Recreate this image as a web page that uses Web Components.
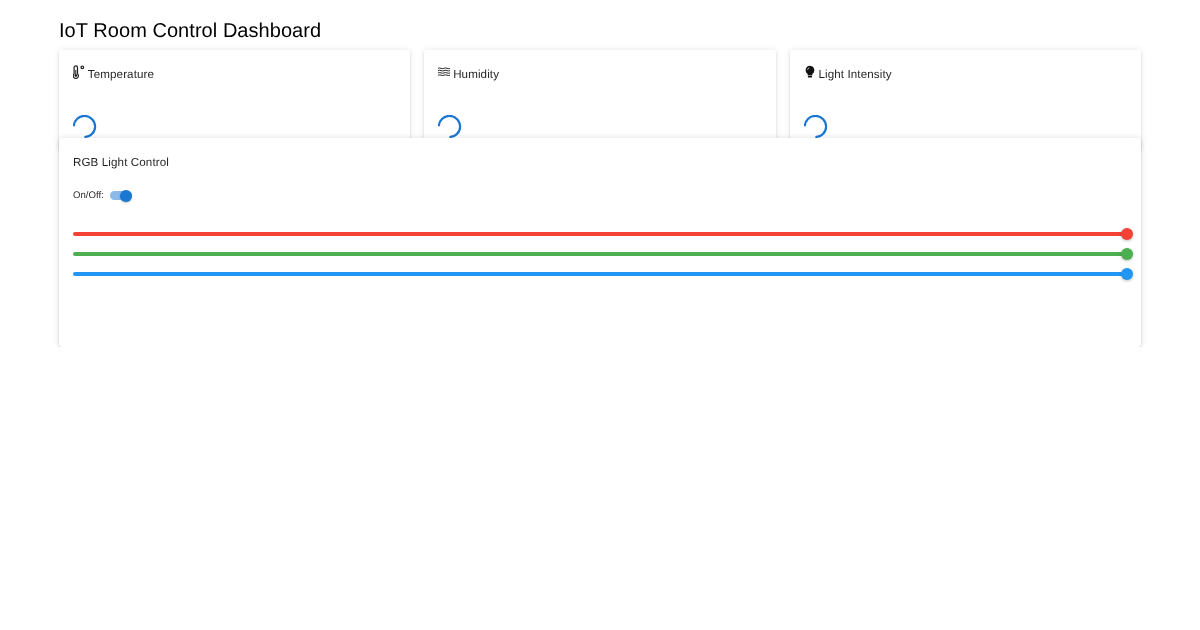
<!DOCTYPE html>
<html lang="en"><head><meta charset="utf-8"><title>IoT Room Control Dashboard</title>
<style>
html,body{margin:0;padding:0;background:#fff;font-family:"Liberation Sans",Arial,sans-serif;text-rendering:geometricPrecision}
</style></head><body>
<iot-dashboard>
  <sensor-card slot="sensors" label="Temperature"><svg slot="icon" viewBox="0 0 12 14" width="12" height="14"><path fill="none" stroke="#1c1c1c" stroke-width="1.200" d="M1.100 2.600a1.700 1.700 0 0 1 3.400 0v6.200a2.600 2.600 0 1 1-3.400 0z"/><rect x="2.300" y="5" width="1" height="5" fill="#1c1c1c"/><circle cx="2.800" cy="10.600" r="1.300" fill="#1c1c1c"/><circle cx="9.300" cy="2.300" r="1.300" fill="none" stroke="#1c1c1c" stroke-width="1.200"/></svg></sensor-card>
  <sensor-card slot="sensors" label="Humidity"><svg slot="icon" viewBox="0 0 12 14" width="12" height="14"><g fill="none" stroke="#111" stroke-width=".9"><path d="M0 3.300c1-.45 2-.45 3 0s2 .45 3 0 2-.45 3 0 2 .45 3 0"/><path d="M0 5.600c1-.45 2-.45 3 0s2 .45 3 0 2-.45 3 0 2 .45 3 0"/><path d="M0 7.900c1-.45 2-.45 3 0s2 .45 3 0 2-.45 3 0 2 .45 3 0"/><path d="M0 10.200c1-.45 2-.45 3 0s2 .45 3 0 2-.45 3 0 2 .45 3 0"/></g></svg></sensor-card>
  <sensor-card slot="sensors" label="Light Intensity"><svg slot="icon" viewBox="0 0 12 14" width="12" height="14"><path fill="#111" d="M6 .8a4.400 4.400 0 0 0-2.300 8.100V10.400h4.600V8.900A4.400 4.400 0 0 0 6 .8z"/><rect x="3.900" y="10.900" width="4.200" height="1.700" rx=".6" fill="#111"/><path d="M3.500 4.900a2.600 2.600 0 0 1 1.900-2.100" fill="none" stroke="#fff" stroke-width=".7"/></svg></sensor-card>
  <rgb-control slot="control"></rgb-control>
</iot-dashboard>
<script>
function tpl(html){const t=document.createElement('template');t.innerHTML=html;return t;}
const dashT=tpl(`<style>
:host{display:block;width:1082px;margin:0 auto;box-sizing:border-box;padding-top:18px;will-change:transform}
h1{margin:0;font:400 20px/27px "Liberation Sans",Arial,sans-serif;color:#000;letter-spacing:.05px;height:32px}
.row{display:grid;grid-template-columns:repeat(3,1fr);gap:14px}
.ctl{margin-top:-14px;position:relative}
</style><h1>IoT Room Control Dashboard</h1><div class="row"><slot name="sensors"></slot></div><div class="ctl"><slot name="control"></slot></div>`);
class IotDashboard extends HTMLElement{constructor(){super();this.attachShadow({mode:'open'}).append(dashT.content.cloneNode(true));}}
customElements.define('iot-dashboard',IotDashboard);

const cardT=tpl(`<style>
:host{display:block;box-sizing:border-box;height:102px;padding:14px;background:#fff;border-radius:2px;
box-shadow:0 2px 2px -1px rgba(0,0,0,.22),0 1px 2px rgba(0,0,0,.12),0 0 6px rgba(0,0,0,.1)}
.t{display:flex;align-items:flex-start;height:20px;font-size:11.600px;line-height:21.500px;letter-spacing:.108px;color:rgba(0,0,0,.87);gap:2.800px}
.i{display:block;height:14px;margin-top:1px}
.sp{display:block;margin-top:31px}
</style><div class="t"><span class="i"><slot name="icon"></slot></span><span id="l"></span></div>
<svg class="sp" width="24" height="24" viewBox="0 0 24 24"><path d="M1.100 11.200A10.600 10.600 0 1 1 11.600 22.100" fill="none" stroke="#1976d2" stroke-width="2.200" transform="translate(-.2 0)"/></svg>`);
class SensorCard extends HTMLElement{constructor(){super();const s=this.attachShadow({mode:'open'});s.append(cardT.content.cloneNode(true));s.getElementById('l').textContent=this.getAttribute('label');}}
customElements.define('sensor-card',SensorCard);

const swT=tpl(`<style>
:host{display:block;position:relative;width:22px;height:12px}
.tr{position:absolute;left:0;top:1.500px;width:22px;height:9px;border-radius:5px;background:#1976d2;opacity:.5}
.th{position:absolute;right:0;top:0;width:12px;height:12px;border-radius:50%;background:#1976d2;box-shadow:0 1px 2px rgba(0,0,0,.25)}
</style><div class="tr"></div><div class="th"></div>`);
class ToggleSwitch extends HTMLElement{constructor(){super();this.attachShadow({mode:'open'}).append(swT.content.cloneNode(true));}}
customElements.define('toggle-switch',ToggleSwitch);

const slT=tpl(`<style>
:host{display:block;position:relative;height:4px;color:#000}
.tr{height:4px;border-radius:2px;background:currentColor}
.th{position:absolute;right:-6px;top:-4px;width:12px;height:12px;border-radius:50%;background:currentColor;box-shadow:0 1px 3px rgba(0,0,0,.25)}
</style><div class="tr"></div><div class="th"></div>`);
class ColorSlider extends HTMLElement{constructor(){super();this.attachShadow({mode:'open'}).append(slT.content.cloneNode(true));this.style.color=this.getAttribute('color');}}
customElements.define('color-slider',ColorSlider);

const rgbT=tpl(`<style>
:host{display:block;box-sizing:border-box;height:209px;padding:14px;background:#fff;border-radius:2px;
box-shadow:0 2px 2px -1px rgba(0,0,0,.38),0 1px 2px rgba(0,0,0,.16),0 0 6px rgba(0,0,0,.12)}
.t{font-size:11.600px;line-height:22px;height:20px;letter-spacing:.108px;color:rgba(0,0,0,.87)}
.sw{display:flex;align-items:center;gap:6.500px;margin-top:16.500px;height:14px;font-size:9.600px;color:rgba(0,0,0,.87)}
.sl{display:flex;flex-direction:column;gap:15.800px;margin-top:29.500px;}
</style><div class="t">RGB Light Control</div><div class="sw"><span>On/Off:</span><toggle-switch></toggle-switch></div>
<div class="sl"><color-slider color="#f44336"></color-slider><color-slider color="#4caf50"></color-slider><color-slider color="#2196f3"></color-slider></div>`);
class RgbControl extends HTMLElement{constructor(){super();this.attachShadow({mode:'open'}).append(rgbT.content.cloneNode(true));}}
customElements.define('rgb-control',RgbControl);
</script></body></html>
